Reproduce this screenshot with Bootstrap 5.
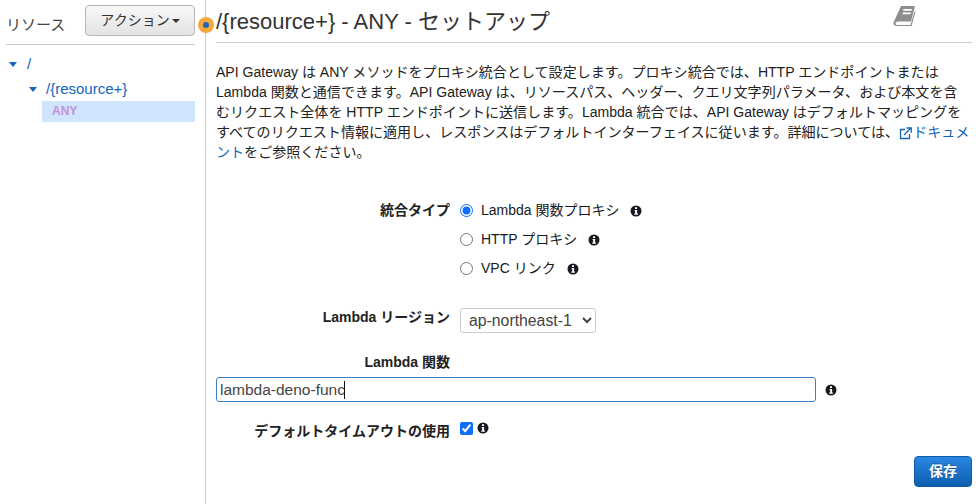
<!doctype html>
<html lang="ja"><head><meta charset="utf-8"><title>セットアップ</title>
<link href="https://cdn.jsdelivr.net/npm/bootstrap@5.3.0/dist/css/bootstrap.min.css" rel="stylesheet">
<style>
html,body{height:504px;overflow:hidden}
body{font-family:"Liberation Sans","Noto Sans CJK JP",sans-serif;font-size:14px;color:#16191f;background:#fff}
.shell{height:504px;position:relative}
.side{width:206px;flex:none;border-right:1px solid #ccc;padding:5px 10px 0 6px}
.side-head{height:40px;border-bottom:1px solid #ccc;align-items:flex-start}
.side-title{font-size:15px;color:#444;margin-top:9px;line-height:22px;width:79px}
.act-btn{width:110px;height:31px;border:1px solid #b5b5b5;border-radius:4px;background:linear-gradient(#f8f8f8,#e3e3e3);font-size:14px;color:#333;display:flex;align-items:center;justify-content:center;gap:2px;padding:0}
.caret-s{width:0;height:0;border:4px solid transparent;border-top:4px solid #333;border-bottom:0}
.tree{padding-top:7px;color:#1166bb;font-size:15px}
.tree-row{height:25px;display:flex;align-items:center}
.tree-row.lv2{padding-left:20px;height:24px}
.tw{width:0;height:0;border:4.5px solid transparent;border-top:5px solid #1166bb;border-bottom:0;margin:0 10px 0 3px}
.lv2 .tw{margin-right:9px}
.tree-sel{margin-left:36px;height:21px;background:#cfe5fd;color:#c391d8;font-weight:700;font-size:12px;line-height:20px;padding-left:10px}
.main{flex:1;padding:0 4px 0 10px;min-width:0}
.main-head{height:43px;border-bottom:1px solid #ccc;position:relative;font-size:22px;line-height:44px;color:#333}
.book{position:absolute;left:677px;top:6px}
.intro{margin:19px 0 0;line-height:20px;color:#222;font-size:14.05px}
.intro a{color:#1166bb;text-decoration:none}
.node-dot{position:absolute;left:198px;top:17px;width:16px;height:16px;border-radius:50%;background:#f7a83c;display:flex;align-items:center;justify-content:center}
.node-dot::after{content:"";width:6px;height:6px;border-radius:50%;background:#1f66b5}
.lab{width:234px;flex:none;text-align:right;font-weight:700;color:#222}
.ctl{margin-left:10px;display:flex;align-items:center}
.radios{margin-top:34px}
.fr{height:29px;display:flex;align-items:center}
.fr input[type=radio]{width:13px;height:13px;margin:0 8px 0 0;accent-color:#0d6efd}
.info{flex:none;margin-left:11px}
.reg{margin-top:25px;height:25px;display:flex;align-items:flex-start}
.reg .lab{line-height:18px}
.reg select{height:25px;width:136px;font-size:15.800px;border:1px solid #ccc;border-radius:3px;background-color:#fff;color:#444;padding:0 0 0 4px;font-family:inherit}
.fn-lab{margin-top:19px;line-height:20px}
.fn-row{margin-top:5px;display:flex;align-items:center}
.fn-input{width:600px;height:25px;border:1px solid #3b7fc9;border-radius:3px;padding:0 3px;font-size:15.500px;color:#444;display:flex;align-items:center}
.cursor{display:inline-block;width:1px;height:18px;background:#111;margin-left:-1px}
.fn-row .info{margin-left:9px}
.chk-row{margin-top:17px;height:24px;display:flex;align-items:flex-start}
.chk-row .lab{line-height:24px}
.chk-row .ctl{align-items:flex-start;padding-top:3px}
.chk-row input{width:13px;height:13px;margin:0 4px 0 0;accent-color:#0d6efd}
.chk-row .info{margin-left:0}
.save{width:58px;height:31px;border:1px solid #0c5da8;border-radius:4px;background:linear-gradient(#2a87e2,#0d5fae);color:#fff;font-weight:700;font-size:14px;padding:0;text-shadow:0 -1px 0 rgba(0,0,0,.25)}
.save-bar{margin-top:13px;justify-content:flex-end}
</style></head><body>
<div class="shell d-flex">
  <div class="side">
    <div class="side-head d-flex">
      <div class="side-title">リソース</div>
      <button class="act-btn" type="button">アクション<span class="caret-s"></span></button>
    </div>
    <div class="tree">
      <div class="tree-row"><span class="tw"></span><span>/</span></div>
      <div class="tree-row lv2"><span class="tw"></span><span>/{resource+}</span></div>
      <div class="tree-sel">ANY</div>
    </div>
  </div>
  <div class="node-dot"></div>
  <div class="main">
    <div class="main-head">/{resource+} - ANY - セットアップ
      <svg class="book" width="24" height="20" viewBox="0 0 24 20" aria-hidden="true"><path d="M8 0h14l-4 15.500H4.500Q2.500 16 2.500 17.500T5 19h12.500l4-13.500 1 .5L18.500 20H4Q0 20 .5 16.500z" fill="#8e8e8e"/><path d="M10.500 3h8.500l-.5 1.800H10zM10 6.500h8l-.5 1.800H9.500z" fill="#fff"/></svg>
    </div>
    <p class="intro">API Gateway は ANY メソッドをプロキシ統合として設定します。プロキシ統合では、HTTP エンドポイントまたは<br>Lambda 関数と通信できます。API Gateway は、リソースパス、ヘッダー、クエリ文字列パラメータ、および本文を含<br>むリクエスト全体を HTTP エンドポイントに送信します。Lambda 統合では、API Gateway はデフォルトマッピングを<br>すべてのリクエスト情報に適用し、レスポンスはデフォルトインターフェイスに従います。詳細については、<a href="#"><svg width="14" height="13" viewBox="0 0 14 13" fill="none" stroke="#1166bb" stroke-width="1.300" aria-hidden="true"><path d="M6 2.500H1.500v9h9V7"/><path d="M5 8l6.500-6.500M7.500 1h4.800v4.800"/></svg>ドキュメ<br>ント</a>をご参照ください。</p>
    <div class="radios">
      <div class="fr"><div class="lab">統合タイプ</div><div class="ctl"><input type="radio" name="t" checked><span>Lambda 関数プロキシ</span><svg class="info" width="12" height="12" viewBox="0 0 12 12" aria-hidden="true"><circle cx="6" cy="6" r="5.500" fill="#16191f"/><path d="M5 2.200h2v1.700H5zM4.600 5h2.500v3.500h.8v1.200H4.300V8.500h.9V6.200h-.6z" fill="#fff"/></svg></div></div>
      <div class="fr"><div class="lab"></div><div class="ctl"><input type="radio" name="t"><span>HTTP プロキシ</span><svg class="info" width="12" height="12" viewBox="0 0 12 12" aria-hidden="true"><circle cx="6" cy="6" r="5.500" fill="#16191f"/><path d="M5 2.200h2v1.700H5zM4.600 5h2.500v3.500h.8v1.200H4.300V8.500h.9V6.200h-.6z" fill="#fff"/></svg></div></div>
      <div class="fr"><div class="lab"></div><div class="ctl"><input type="radio" name="t"><span>VPC リンク</span><svg class="info" width="12" height="12" viewBox="0 0 12 12" aria-hidden="true"><circle cx="6" cy="6" r="5.500" fill="#16191f"/><path d="M5 2.200h2v1.700H5zM4.600 5h2.500v3.500h.8v1.200H4.300V8.500h.9V6.200h-.6z" fill="#fff"/></svg></div></div>
    </div>
    <div class="reg"><div class="lab">Lambda リージョン</div><div class="ctl"><select><option>ap-northeast-1</option></select></div></div>
    <div class="lab fn-lab">Lambda 関数</div>
    <div class="fn-row"><div class="fn-input">lambda-deno-func<span class="cursor"></span></div><svg class="info" width="12" height="12" viewBox="0 0 12 12" aria-hidden="true"><circle cx="6" cy="6" r="5.500" fill="#16191f"/><path d="M5 2.200h2v1.700H5zM4.600 5h2.500v3.500h.8v1.200H4.300V8.500h.9V6.200h-.6z" fill="#fff"/></svg></div>
    <div class="chk-row"><div class="lab">デフォルトタイムアウトの使用</div><div class="ctl"><input type="checkbox" checked><svg class="info" width="12" height="12" viewBox="0 0 12 12" aria-hidden="true"><circle cx="6" cy="6" r="5.500" fill="#16191f"/><path d="M5 2.200h2v1.700H5zM4.600 5h2.500v3.500h.8v1.200H4.300V8.500h.9V6.200h-.6z" fill="#fff"/></svg></div></div>
    <div class="save-bar d-flex"><button class="save" type="button">保存</button></div>
  </div>
</div>
<script src="https://cdn.jsdelivr.net/npm/bootstrap@5.3.0/dist/js/bootstrap.bundle.min.js"></script>
</body></html>
